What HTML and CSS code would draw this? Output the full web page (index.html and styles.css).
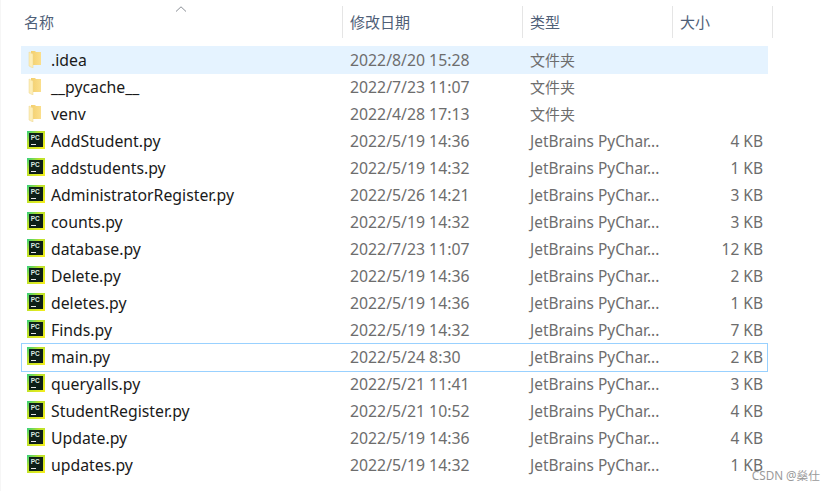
FILE: index.html
```html
<!DOCTYPE html>
<html lang="zh">
<head>
<meta charset="utf-8">
<title>文件列表</title>
<link rel="stylesheet" href="styles.css">
</head>
<body>
<svg class="defs" width="0" height="0" aria-hidden="true">
  <defs>
    <linearGradient id="pcg" x1="0" y1="0" x2="1" y2="1">
      <stop offset="0" stop-color="#2fcf7f"/>
      <stop offset="0.35" stop-color="#b6e02c"/>
      <stop offset="1" stop-color="#f6ee1c"/>
    </linearGradient>
    <linearGradient id="fg" x1="0" y1="0" x2="1" y2="0">
      <stop offset="0" stop-color="#f3cf6e"/>
      <stop offset="1" stop-color="#fbdf8c"/>
    </linearGradient>
    <symbol id="folder" viewBox="0 0 16 18">
      <path d="M3 1h4l1 1h5v13H3z" fill="url(#fg)"/>
      <path d="M1 2l4 2v14l-4-2z" fill="#fdeeb8" stroke="#ecd48f" stroke-width=".5"/>
    </symbol>
    <symbol id="pc" viewBox="0 0 18 18">
      <rect width="18" height="18" fill="url(#pcg)"/>
      <rect x="2" y="2" width="14" height="14" fill="#0d1f17"/>
      <text x="3.700" y="9" class="pc-text">PC</text>
      <rect x="4" y="13" width="5" height="1" fill="#e8e8e8"/>
    </symbol>
  </defs>
</svg>
<main class="explorer">
  <header class="head">
    <div class="h-col h-name">名称<svg class="sort" width="12" height="6" viewBox="0 0 12 6"><path d="M1 5.500L6 .8l5 4.700" fill="none" stroke="#8a8f96"/></svg></div>
    <div class="h-col h-date">修改日期</div>
    <div class="h-col h-type">类型</div>
    <div class="h-col h-size">大小</div>
  </header>
  <div class="list">
    <div class="row hover"><svg class="ico fold"><use href="#folder"/></svg><span class="name">.idea</span><span class="date">2022/8/20 15:28</span><span class="type cn">文件夹</span><span class="size"></span></div>
    <div class="row"><svg class="ico fold"><use href="#folder"/></svg><span class="name">__pycache__</span><span class="date">2022/7/23 11:07</span><span class="type cn">文件夹</span><span class="size"></span></div>
    <div class="row"><svg class="ico fold"><use href="#folder"/></svg><span class="name">venv</span><span class="date">2022/4/28 17:13</span><span class="type cn">文件夹</span><span class="size"></span></div>
    <div class="row"><svg class="ico"><use href="#pc"/></svg><span class="name">AddStudent.py</span><span class="date">2022/5/19 14:36</span><span class="type">JetBrains PyChar...</span><span class="size">4 KB</span></div>
    <div class="row"><svg class="ico"><use href="#pc"/></svg><span class="name">addstudents.py</span><span class="date">2022/5/19 14:32</span><span class="type">JetBrains PyChar...</span><span class="size">1 KB</span></div>
    <div class="row"><svg class="ico"><use href="#pc"/></svg><span class="name">AdministratorRegister.py</span><span class="date">2022/5/26 14:21</span><span class="type">JetBrains PyChar...</span><span class="size">3 KB</span></div>
    <div class="row"><svg class="ico"><use href="#pc"/></svg><span class="name">counts.py</span><span class="date">2022/5/19 14:32</span><span class="type">JetBrains PyChar...</span><span class="size">3 KB</span></div>
    <div class="row"><svg class="ico"><use href="#pc"/></svg><span class="name">database.py</span><span class="date">2022/7/23 11:07</span><span class="type">JetBrains PyChar...</span><span class="size">12 KB</span></div>
    <div class="row"><svg class="ico"><use href="#pc"/></svg><span class="name">Delete.py</span><span class="date">2022/5/19 14:36</span><span class="type">JetBrains PyChar...</span><span class="size">2 KB</span></div>
    <div class="row"><svg class="ico"><use href="#pc"/></svg><span class="name">deletes.py</span><span class="date">2022/5/19 14:36</span><span class="type">JetBrains PyChar...</span><span class="size">1 KB</span></div>
    <div class="row"><svg class="ico"><use href="#pc"/></svg><span class="name">Finds.py</span><span class="date">2022/5/19 14:32</span><span class="type">JetBrains PyChar...</span><span class="size">7 KB</span></div>
    <div class="row focus"><svg class="ico"><use href="#pc"/></svg><span class="name">main.py</span><span class="date">2022/5/24 8:30</span><span class="type">JetBrains PyChar...</span><span class="size">2 KB</span></div>
    <div class="row"><svg class="ico"><use href="#pc"/></svg><span class="name">queryalls.py</span><span class="date">2022/5/21 11:41</span><span class="type">JetBrains PyChar...</span><span class="size">3 KB</span></div>
    <div class="row"><svg class="ico"><use href="#pc"/></svg><span class="name">StudentRegister.py</span><span class="date">2022/5/21 10:52</span><span class="type">JetBrains PyChar...</span><span class="size">4 KB</span></div>
    <div class="row"><svg class="ico"><use href="#pc"/></svg><span class="name">Update.py</span><span class="date">2022/5/19 14:36</span><span class="type">JetBrains PyChar...</span><span class="size">4 KB</span></div>
    <div class="row"><svg class="ico"><use href="#pc"/></svg><span class="name">updates.py</span><span class="date">2022/5/19 14:32</span><span class="type">JetBrains PyChar...</span><span class="size">1 KB</span></div>
  </div>
</main>
<div class="mark">CSDN @燊仕</div>
</body>
</html>
```
FILE: styles.css
```css
* { box-sizing: border-box; }
html, body { margin: 0; height: 100%; background: #fff; overflow: hidden; }
body {
  position: relative;
  font-family: "Noto Sans", "Noto Sans CJK SC", sans-serif;
  font-size: 15.8px;
}
.defs { position: absolute; }
.explorer { padding: 6px 0 0 1px; border-left: 1px solid #f6f6f6; height: 100%; }
.head { display: flex; height: 32px; margin-bottom: 8px; width: 772px; }
.h-col {
  position: relative;
  color: #4f6078;
  font-size: 15px;
  line-height: 32px;
  border-right: 1px solid #e5e5e5;
}
.h-name { width: 341px; padding-left: 22px; }
.h-date { width: 180px; padding-left: 7px; }
.h-type { width: 150px; padding-left: 7px; }
.h-size { width: 100px; padding-left: 7px; }
.sort { position: absolute; left: 173px; top: 0; }
.list { margin-left: 19px; width: 747px; }
.row {
  display: grid;
  grid-template-columns: 29px 299px 180px 150px 83px;
  align-items: center;
  height: 27px;
  border: 1px solid transparent;
  line-height: 25px;
}
.hover { background: #e5f3ff; height: 28px; border-color: #e5f3ff; }
.focus { border-color: #99d1ff; height: 29px; margin: -1px 0; }
.ico { width: 18px; height: 18px; margin: 0 0 3px 5px; display: block; }
.fold { width: 16px; height: 18px; margin-left: 6px; }
.pc-text { font: 700 6.5px "Liberation Sans", sans-serif; fill: #dcebe0; }
.name { color: #1a1a1a; white-space: nowrap; grid-column: 2; }
.date { color: #6d6d6d; white-space: nowrap; }
.type { color: #6d6d6d; white-space: nowrap; font-size: 15.4px; }
.cn { font-size: 15px; }
.size { color: #6d6d6d; text-align: right; white-space: nowrap; font-size: 15.5px; }
.mark {
  position: absolute;
  right: 15px;
  bottom: 9px;
  font-size: 11.7px;
  line-height: 14px;
  color: #9a9a9a;
}
```
